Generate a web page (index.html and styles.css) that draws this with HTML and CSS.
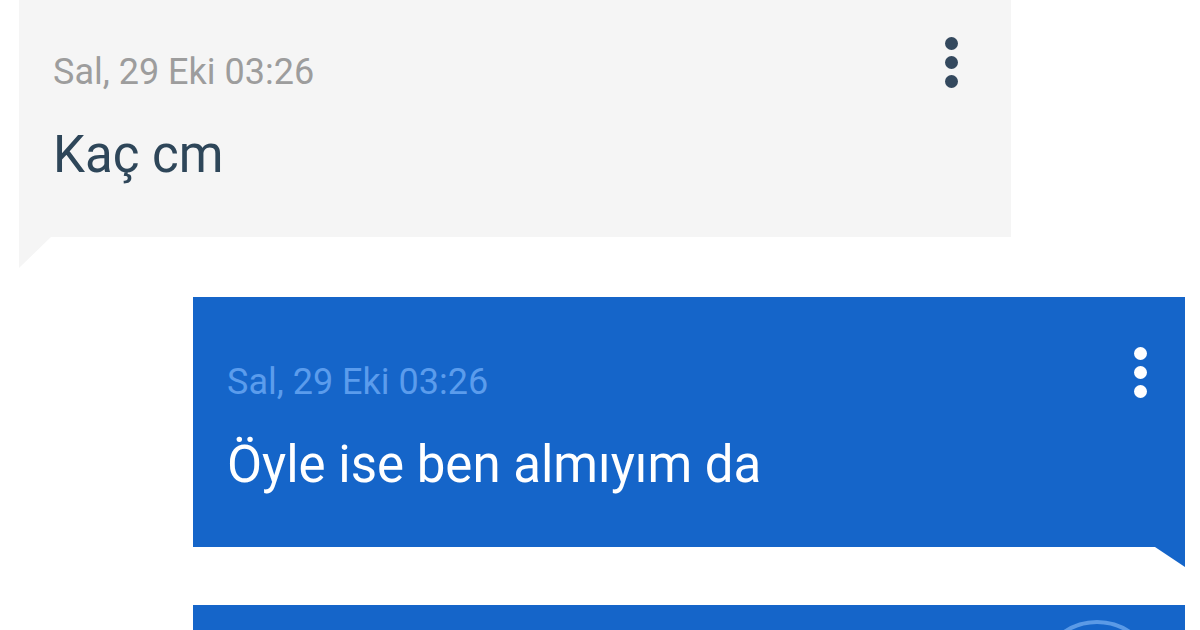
FILE: index.html
```html
<!DOCTYPE html>
<html lang="tr">
<head>
<meta charset="utf-8">
<link rel="stylesheet" href="styles.css">
</head>
<body>
<div class="thread">
  <div class="bubble in">
    <div class="date">Sal, 29 Eki 03:26</div>
    <div class="text">Kaç cm</div>
    <span class="kebab"><i></i><i></i><i></i></span>
  </div>
  <div class="bubble out">
    <div class="date">Sal, 29 Eki 03:26</div>
    <div class="text">Öyle ise ben almıyım da</div>
    <span class="kebab"><i></i><i></i><i></i></span>
  </div>
  <div class="bubble out partial">
    <span class="ring"></span>
  </div>
</div>
</body>
</html>
```
FILE: styles.css
```css
html, body {
  margin: 0;
  padding: 0;
  background: #ffffff;
  width: 1200px;
  height: 630px;
  overflow: hidden;
  font-family: Roboto, "Noto Sans", sans-serif;
}
.thread {
  display: flex;
  flex-direction: column;
  gap: 60px;
  margin-top: -13px;
}
.bubble {
  position: relative;
  width: 992px;
  box-sizing: border-box;
  padding: 63px 34px 52px;
}
.bubble.in {
  margin-left: 19px;
  background: #f5f5f5;
}
.bubble.out {
  margin-left: 193px;
  background: #1565c9;
}
.bubble.partial {
  margin-top: -2px;
  height: 40px;
  padding: 0;
  overflow: hidden;
}
.date {
  font-size: 36px;
  line-height: 44px;
}
.text {
  font-size: 51px;
  line-height: 60px;
  margin-top: 31px;
}
.in .date { color: #9d9d9d; }
.in .text { color: #2e4659; }
.out .date { color: #5b9cec; }
.out .text { color: #ffffff; }

.bubble.in::after {
  content: "";
  position: absolute;
  left: 0;
  top: 100%;
  width: 32px;
  height: 31px;
  background: #f5f5f5;
  clip-path: polygon(0 0, 100% 0, 0 100%);
}
.bubble.out:not(.partial)::after {
  content: "";
  position: absolute;
  right: 0;
  top: 100%;
  width: 30px;
  height: 20px;
  background: #1565c9;
  clip-path: polygon(0 0, 100% 0, 100% 100%);
}
.kebab {
  position: absolute;
  top: 50px;
  display: flex;
  flex-direction: column;
  gap: 6px;
}
.in .kebab { right: 53px; }
.out .kebab { right: 38px; }
.kebab i {
  display: block;
  width: 13px;
  height: 13px;
  border-radius: 50%;
}
.in .kebab i { background: #34495e; }
.out .kebab i { background: #ffffff; }
.ring {
  position: absolute;
  top: 15px;
  right: 28px;
  width: 112px;
  height: 112px;
  border: 4px solid #5b9ae6;
  border-radius: 50%;
}
```
